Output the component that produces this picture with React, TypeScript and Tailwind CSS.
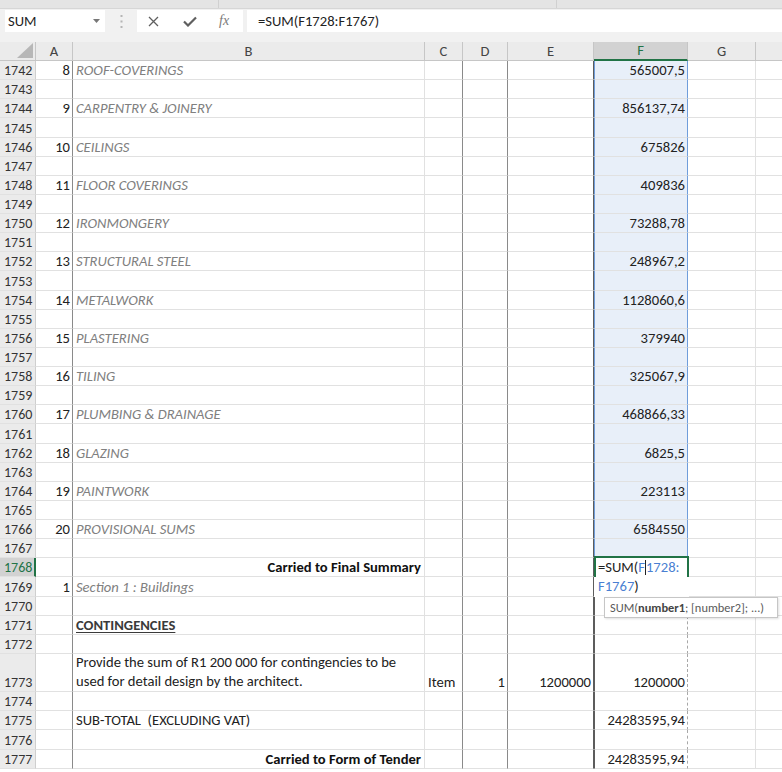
import clsx from 'clsx'

type Row = {
  n: number
  a?: string
  b?: string
  kind?: 'section' | 'total' | 'head' | 'plain'
  c?: string
  d?: string
  e?: string
  f?: string
  tall?: boolean
}

const sections: [string, string, string][] = [
  ['8', 'ROOF-COVERINGS', '565007,5'],
  ['9', 'CARPENTRY & JOINERY', '856137,74'],
  ['10', 'CEILINGS', '675826'],
  ['11', 'FLOOR COVERINGS', '409836'],
  ['12', 'IRONMONGERY', '73288,78'],
  ['13', 'STRUCTURAL STEEL', '248967,2'],
  ['14', 'METALWORK', '1128060,6'],
  ['15', 'PLASTERING', '379940'],
  ['16', 'TILING', '325067,9'],
  ['17', 'PLUMBING & DRAINAGE', '468866,33'],
  ['18', 'GLAZING', '6825,5'],
  ['19', 'PAINTWORK', '223113'],
  ['20', 'PROVISIONAL SUMS', '6584550'],
]

const rows: Row[] = [
  ...sections.flatMap(([a, b, f], i) => [
    { n: 1742 + i * 2, a, b, kind: 'section' as const, f },
    { n: 1743 + i * 2 },
  ]),
  { n: 1768, b: 'Carried to Final Summary', kind: 'total' },
  { n: 1769, a: '1', b: 'Section 1 : Buildings', kind: 'section' },
  { n: 1770 },
  { n: 1771, b: 'CONTINGENCIES', kind: 'head' },
  { n: 1772 },
  { n: 1773, b: 'contingency', kind: 'plain', c: 'Item', d: '1', e: '1200000', f: '1200000', tall: true },
  { n: 1774 },
  { n: 1775, b: 'SUB-TOTAL  (EXCLUDING VAT)', kind: 'plain', f: '24283595,94' },
  { n: 1776 },
  { n: 1777, b: 'Carried to Form of Tender', kind: 'total', f: '24283595,94' },
]

const font = "font-['Carlito','Lato',sans-serif]"
const cell = 'shrink-0 flex items-end border-b border-r border-b-[#e1e1e1] whitespace-nowrap overflow-visible'

function SheetRow({ row }: { row: Row }) {
  const inRange = row.n <= 1767
  const active = row.n === 1768
  const h = row.tall ? 'h-[38.25px]' : 'h-[19.125px]'

  return (
    <div className={clsx('flex', h)}>
      <div
        className={clsx(
          cell,
          'w-[36px] pl-[4px] text-[14px]',
          active
            ? 'bg-[#d2d2d2] text-[#217346] border-r-2 border-r-[#217346] border-b-[#c6c6c6]'
            : 'bg-[#ebebeb] text-[#333] border-r-[#cfcfcf] border-b-[#dadada]'
        )}
      >
        {row.n}
      </div>
      <div className={clsx(cell, 'w-[37px] justify-end pr-[2px] border-r-[#8a8a8a] text-[#222]')}>{row.a}</div>
      <div
        className={clsx(
          cell,
          'w-[352px] px-[3px] border-r-[#e1e1e1] whitespace-pre',
          row.kind === 'total' && 'justify-end font-bold text-[#111]',
          row.kind === 'section' && 'italic text-[#808080]',
          row.kind === 'head' && 'font-bold underline underline-offset-2 text-[#3a3a3a]',
          row.kind === 'plain' && 'text-[#222]'
        )}
      >
        {row.b === 'contingency' ? (
          <span className="leading-[19px]">
            Provide the sum of R1 200 000 for contingencies to be
            <br />
            used for detail design by the architect.
          </span>
        ) : (
          row.b
        )}
      </div>
      <div className={clsx(cell, 'w-[38px] px-[3px] border-r-[#8a8a8a] text-[#222]')}>{row.c}</div>
      <div className={clsx(cell, 'w-[45px] justify-end pr-[2px] border-r-[#8a8a8a] text-[#222]')}>{row.d}</div>
      <div className={clsx(cell, 'w-[86px] justify-end pr-[2px] border-r-[#5c5c5c] text-[#222]')}>{row.e}</div>
      <div
        className={clsx(
          cell,
          'relative w-[94px] justify-end pr-[2px] text-[#222] border-l',
          inRange
            ? 'bg-[#e8eff9] border-l-[#6f9ddb] border-r-[#6f9ddb] border-b-[#dae2ee]'
            : 'border-l-[#5c5c5c] border-r-[#a8a8a8] [border-right-style:dashed]',
          row.n === 1767 && 'border-b-[#6f9ddb]'
        )}
      >
        {row.f}
        {active && <ActiveEditor />}
      </div>
      <div className={clsx(cell, 'w-[68px] border-r-[#e1e1e1]')} />
      <div className={clsx(cell, 'flex-1 border-r-0')} />
    </div>
  )
}

function ActiveEditor() {
  return (
    <>
      <div className="absolute -top-[1px] -left-[1px] w-[95px] h-[40px] bg-white z-10 pl-[4px] pt-[1px] text-left leading-[19px] text-[#222]">
        <div className="flex items-center whitespace-nowrap">
          =SUM(<span className="text-[#4a7fd2]">F</span>
          <span className="inline-block w-px h-[15px] bg-[#222]" />
          <span className="text-[#4a7fd2]">1728:</span>
        </div>
        <div className="whitespace-nowrap">
          <span className="text-[#4a7fd2]">F1767</span>)
        </div>
      </div>
      <div className="absolute -top-[2px] -left-[1px] w-[95px] h-[21px] border-t-2 border-x-2 border-[#217346] z-20" />
      <div className="absolute top-[39px] left-[9px] w-[174px] h-[21px] bg-white border border-[#c6c6c6] shadow-[1px_1px_2px_rgba(0,0,0,0.12)] z-20 flex items-center pl-[5px] text-[12.4px] text-[#5a5a5a] whitespace-nowrap">
        SUM(<span className="font-bold text-[#444]">number1</span>; [number2]; ...)
      </div>
    </>
  )
}

function HeaderRow() {
  const hc = 'shrink-0 h-full flex items-center justify-center border-r border-b border-[#c6c6c6] text-[#444]'
  return (
    <div className="flex h-[19px] bg-[#ebebeb]">
      <div className={clsx(hc, 'w-[36px] relative')}>
        <svg width="16" height="15" viewBox="0 0 16 15" className="absolute right-[2px] bottom-[2px]">
          <polygon points="16,0 16,15 0,15" fill="#b7b7b7" />
        </svg>
      </div>
      <div className={clsx(hc, 'w-[37px]')}>A</div>
      <div className={clsx(hc, 'w-[352px]')}>B</div>
      <div className={clsx(hc, 'w-[38px]')}>C</div>
      <div className={clsx(hc, 'w-[45px]')}>D</div>
      <div className={clsx(hc, 'w-[86px]')}>E</div>
      <div className={clsx(hc, 'w-[94px] bg-[#d2d2d2] text-[#217346] border-b-2 border-b-[#217346]')}>F</div>
      <div className={clsx(hc, 'w-[68px]')}>G</div>
      <div className={clsx(hc, 'flex-1 border-r-0')} />
    </div>
  )
}

function FormulaBar() {
  return (
    <div className="bg-[#f1f1f1]">
      <div className="flex h-[9px] bg-[#e4e4e4] border-b border-[#d6d6d6]">
        <div className="w-[219px] border-r border-[#d0d0d0]" />
        <div className="w-[338px] border-r border-[#d0d0d0]" />
      </div>
      <div className="flex h-[33px] pt-[1px] pl-[5px]">
        <div className="w-[100px] h-[22px] bg-white flex items-center justify-between pl-[3px] pr-[5px] text-[#222]">
          <span>SUM</span>
          <svg width="7" height="4" viewBox="0 0 7 4">
            <polygon points="0,0 7,0 3.5,4" fill="#777" />
          </svg>
        </div>
        <div className="w-[32px] h-[22px] flex items-center justify-center">
          <svg width="3" height="13" viewBox="0 0 3 13">
            <rect x="0.5" y="0" width="2" height="2" fill="#b5b5b5" />
            <rect x="0.5" y="5.5" width="2" height="2" fill="#b5b5b5" />
            <rect x="0.5" y="11" width="2" height="2" fill="#b5b5b5" />
          </svg>
        </div>
        <div className="w-[106px] h-[22px] bg-white flex items-center">
          <svg width="11" height="11" viewBox="0 0 11 11" className="ml-[11px]">
            <path d="M1 1 L10 10 M10 1 L1 10" stroke="#5f5f5f" strokeWidth="1.3" />
          </svg>
          <svg width="14" height="11" viewBox="0 0 14 11" className="ml-[24px]">
            <path d="M1 5.5 L5 9.5 L13 1.5" stroke="#5f5f5f" strokeWidth="2.2" fill="none" />
          </svg>
          <span className="ml-[22px] italic text-[#7a7a7a] font-['Liberation_Serif',serif] text-[14px] leading-none">fx</span>
        </div>
        <div className="ml-[4px] flex-1 h-[22px] bg-white flex items-center pl-[11px] text-[#222]">
          =SUM(F1728:F1767)
        </div>
      </div>
    </div>
  )
}

export default function App() {
  return (
    <div className={clsx('w-[782px] h-[772px] overflow-hidden bg-white text-[14.6px] leading-[17px]', font)}>
      <FormulaBar />
      <HeaderRow />
      <div>
        {rows.map((r) => (
          <SheetRow key={r.n} row={r} />
        ))}
      </div>
    </div>
  )
}
